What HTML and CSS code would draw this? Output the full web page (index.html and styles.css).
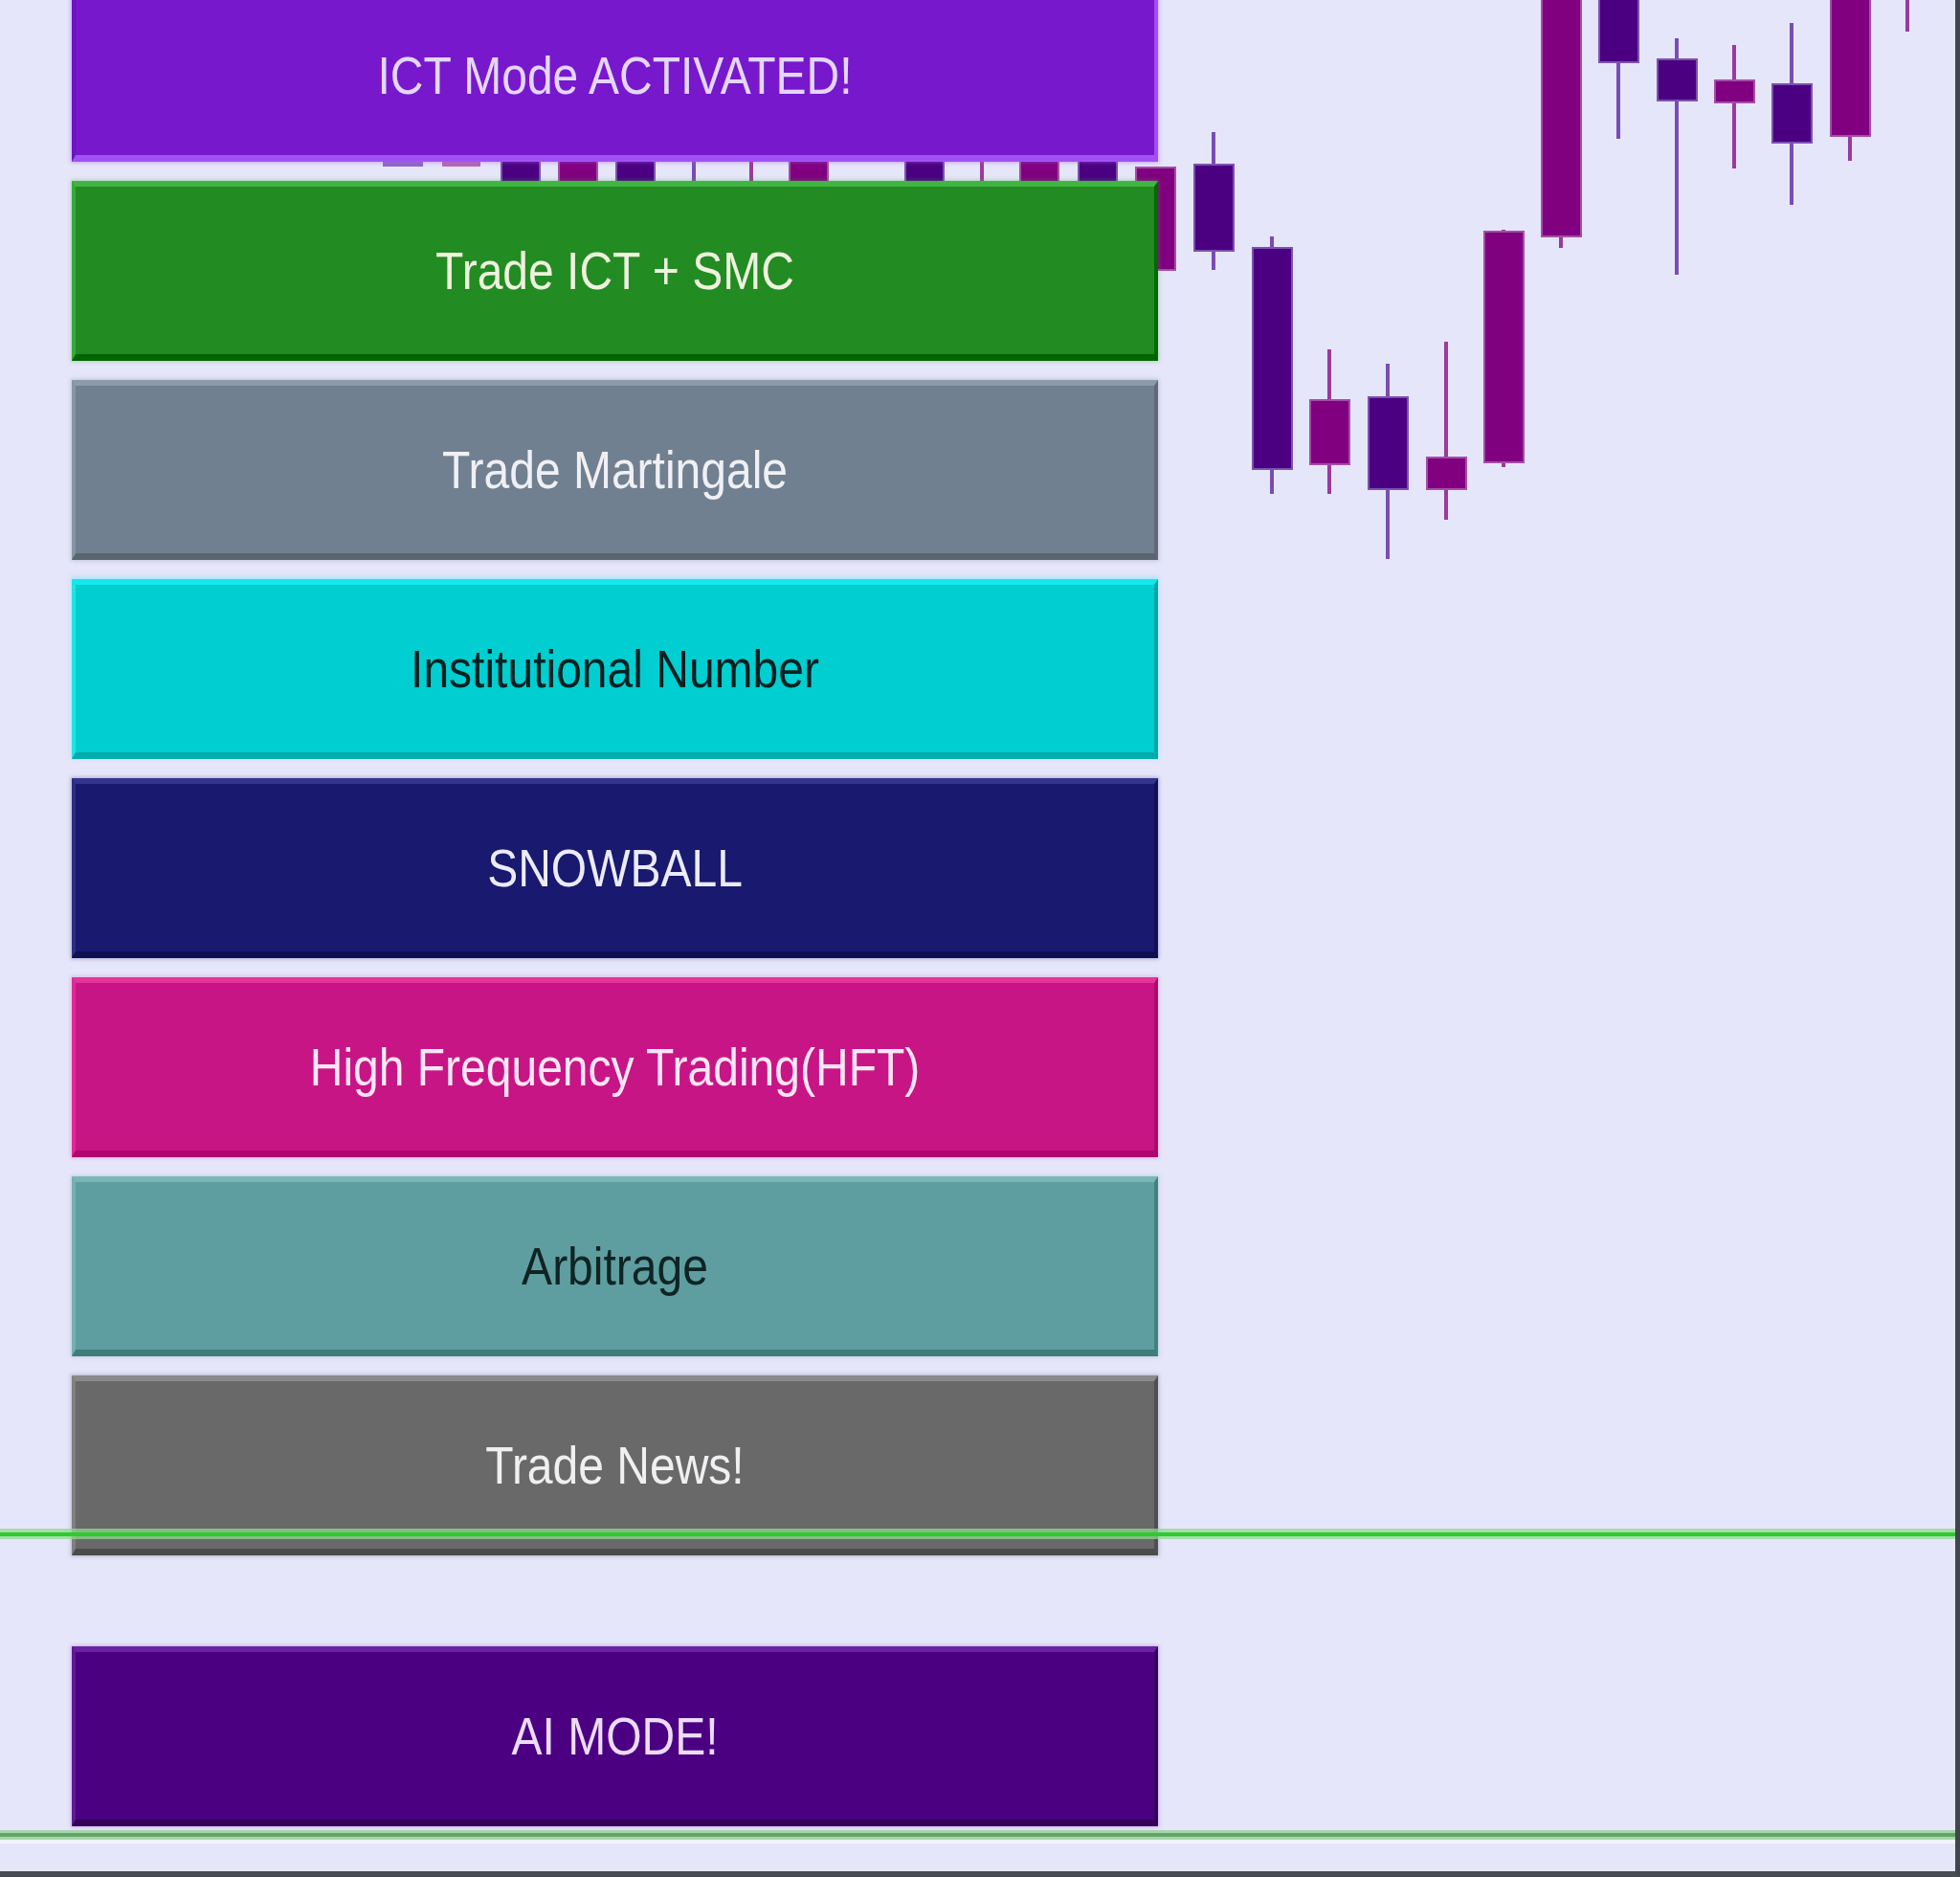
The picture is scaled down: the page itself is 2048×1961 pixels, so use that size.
FILE: index.html
```html
<!DOCTYPE html>
<html lang="en">
<head>
<meta charset="utf-8">
<title>Trading Panel</title>
<link rel="stylesheet" href="styles.css">
</head>
<body>
<div class="stage">
  <svg class="chart" viewBox="0 0 2048 1961" width="2048" height="1961" xmlns="http://www.w3.org/2000/svg">
    <g class="wick-i">
      <rect x="1266" y="138" width="4" height="144"/>
      <rect x="1327" y="247" width="4" height="269"/>
      <rect x="1448" y="380" width="4" height="204"/>
      <rect x="1689" y="0" width="4" height="145"/>
      <rect x="1750" y="40" width="4" height="247"/>
      <rect x="1870" y="24" width="4" height="190"/>
      <rect x="723" y="150" width="4" height="45"/>
    </g>
    <g class="wick-m">
      <rect x="1387" y="365" width="4" height="151"/>
      <rect x="1509" y="357" width="4" height="186"/>
      <rect x="1569" y="240" width="4" height="248"/>
      <rect x="1629" y="0" width="4" height="259"/>
      <rect x="1810" y="47" width="4" height="129"/>
      <rect x="1931" y="0" width="4" height="168"/>
      <rect x="1991" y="0" width="4" height="33"/>
      <rect x="783" y="150" width="4" height="45"/>
      <rect x="1024" y="150" width="4" height="45"/>
    </g>
    <g class="body-i">
      <rect x="1248" y="172" width="41" height="90"/>
      <rect x="1309" y="259" width="41" height="231"/>
      <rect x="1430" y="415" width="41" height="96"/>
      <rect x="1671" y="-4" width="41" height="69"/>
      <rect x="1732" y="62" width="41" height="43"/>
      <rect x="1852" y="88" width="41" height="61"/>
      <rect x="524" y="150" width="40" height="50"/>
      <rect x="644" y="150" width="40" height="50"/>
      <rect x="946" y="150" width="40" height="50"/>
      <rect x="1127" y="150" width="40" height="50"/>
    </g>
    <g class="body-m">
      <rect x="1187" y="175" width="41" height="107"/>
      <rect x="1369" y="418" width="41" height="67"/>
      <rect x="1491" y="478" width="41" height="33"/>
      <rect x="1551" y="242" width="41" height="241"/>
      <rect x="1611" y="-4" width="41" height="251"/>
      <rect x="1792" y="84" width="41" height="23"/>
      <rect x="1913" y="-4" width="41" height="146"/>
      <rect x="584" y="150" width="40" height="50"/>
      <rect x="825" y="150" width="40" height="50"/>
      <rect x="1066" y="150" width="40" height="50"/>
    </g>
    <g class="body-faded">
      <rect class="fade-i" x="400" y="150" width="42" height="24"/>
      <rect class="fade-m" x="462" y="150" width="40" height="24"/>
    </g>
  </svg>

  <div class="panel">
    <div class="btn btn-ict pressed"><span class="label">ICT Mode ACTIVATED!</span></div>
    <div class="btn btn-smc"><span class="label">Trade ICT + SMC</span></div>
    <div class="btn btn-mart"><span class="label">Trade Martingale</span></div>
    <div class="btn btn-inst"><span class="label">Institutional Number</span></div>
    <div class="btn btn-snow"><span class="label">SNOWBALL</span></div>
    <div class="btn btn-hft"><span class="label">High Frequency Trading(HFT)</span></div>
    <div class="btn btn-arb"><span class="label">Arbitrage</span></div>
    <div class="btn btn-news"><span class="label">Trade News!</span></div>
    <div class="btn btn-ai"><span class="label">AI MODE!</span></div>
  </div>

  <svg class="lines" viewBox="0 0 2048 1961" width="2048" height="1961" xmlns="http://www.w3.org/2000/svg">
    <rect class="line1-glow" x="0" y="1597" width="2048" height="11"/>
    <rect class="line1" x="0" y="1601" width="2048" height="4"/>
    <rect class="line2-white" x="0" y="1920" width="2048" height="6"/>
    <rect class="line2-glow" x="0" y="1912" width="2048" height="10"/>
    <rect class="line2" x="0" y="1915" width="2048" height="4"/>
  </svg>
</div>
</body>
</html>
```

FILE: styles.css
```css
html, body {
  margin: 0;
  padding: 0;
}

body {
  width: 2048px;
  height: 1961px;
  overflow: hidden;
  background: #e6e6fa;
  font-family: "Liberation Sans", Arial, sans-serif;
}

.stage {
  display: grid;
  grid-template-columns: 2048px;
  grid-template-rows: 1961px;
  width: 2048px;
  height: 1961px;
  box-sizing: border-box;
  border-right: 5px solid #40464d;
  border-bottom: 6px solid #474c53;
  overflow: hidden;
  background: #e6e6fa;
}

.chart,
.panel,
.lines {
  grid-area: 1 / 1;
}

.chart {
  display: block;
}

.wick-i rect { fill: #7a4cb6; }
.wick-m rect { fill: #9a3a9e; }

.body-i rect {
  fill: #4b0082;
  stroke: #7a52b0;
  stroke-width: 2;
}

.body-m rect {
  fill: #800080;
  stroke: #a24ea8;
  stroke-width: 2;
}

.fade-i { fill: #8e68c4; }
.fade-m { fill: #b468b6; }

.panel {
  display: flex;
  flex-direction: column;
  align-self: start;
  gap: 20px;
  width: 1135px;
  margin-top: -19px;
  margin-left: 75px;
}

.btn {
  box-sizing: border-box;
  height: 188px;
  display: flex;
  align-items: center;
  justify-content: center;
  border-style: solid;
  border-width: 6px 4px 7px 4px;
  font-size: 48px;
  line-height: 1;
  color: #f6f2ff;
}

.label {
  display: inline-block;
  transform: scaleY(1.17);
  white-space: nowrap;
}

.pressed {
  padding-top: 8px;
}

.btn-ict {
  background: #7718cd;
  border-color: #6a12bd #a04cf2 #a152f5 #6c14c2;
  box-shadow: 0 0 4px 1px rgba(160, 90, 240, 0.45);
  color: #e4d6fb;
}

.btn-smc {
  background: #228b22;
  border-color: #41b541 #006800 #006400 #38a838;
  box-shadow: 0 0 4px 1px rgba(60, 170, 60, 0.35);
  color: #eef2de;
}

.btn-mart {
  background: #708090;
  border-color: #8e9aa8 #5d6976 #5a6570 #8794a2;
  box-shadow: 0 0 4px 1px rgba(110, 120, 140, 0.3);
  color: #f0f0f4;
}

.btn-inst {
  background: #00ced1;
  border-color: #14e9ec #00a8aa #00abad #22e2e4;
  box-shadow: 0 -2px 4px 1px rgba(120, 230, 245, 0.5);
  color: #052222;
}

.btn-snow {
  background: #191970;
  border-color: #34348c #101058 #0f0f52 #2c2c84;
  box-shadow: 0 0 4px 1px rgba(80, 80, 150, 0.4);
  color: #ebebfa;
}

.btn-hft {
  background: #c71585;
  border-color: #e3349c #ad0a6c #b0076c #dc2a95;
  box-shadow: 0 0 4px 1px rgba(220, 90, 170, 0.35);
  color: #fde6f4;
}

.btn-arb {
  background: #5f9ea0;
  border-color: #7bb6b7 #42807f #3f7c7a #74b0b1;
  box-shadow: 0 0 4px 1px rgba(110, 170, 170, 0.35);
  color: #102424;
}

.btn-news {
  background: #696969;
  border-color: #8a8a8a #4f4f4f #4c4c4c #808080;
  box-shadow: 0 0 4px 1px rgba(100, 100, 110, 0.35);
  color: #f0f0f2;
}

.btn-ai {
  background: #4b0082;
  margin-top: 75px;
  border-color: #6a22a0 #36005e #34005c #5f1896;
  box-shadow: 0 0 4px 1px rgba(150, 100, 200, 0.4);
  color: #ecdcfa;
}

.lines {
  display: block;
  pointer-events: none;
}

.line1-glow { fill: #8fd98f; opacity: 0.75; }
.line1 { fill: #2ecb2e; }
.line2-white { fill: #f2f4fb; }
.line2-glow { fill: #a9d3ad; }
.line2 { fill: #5ea764; }
```
